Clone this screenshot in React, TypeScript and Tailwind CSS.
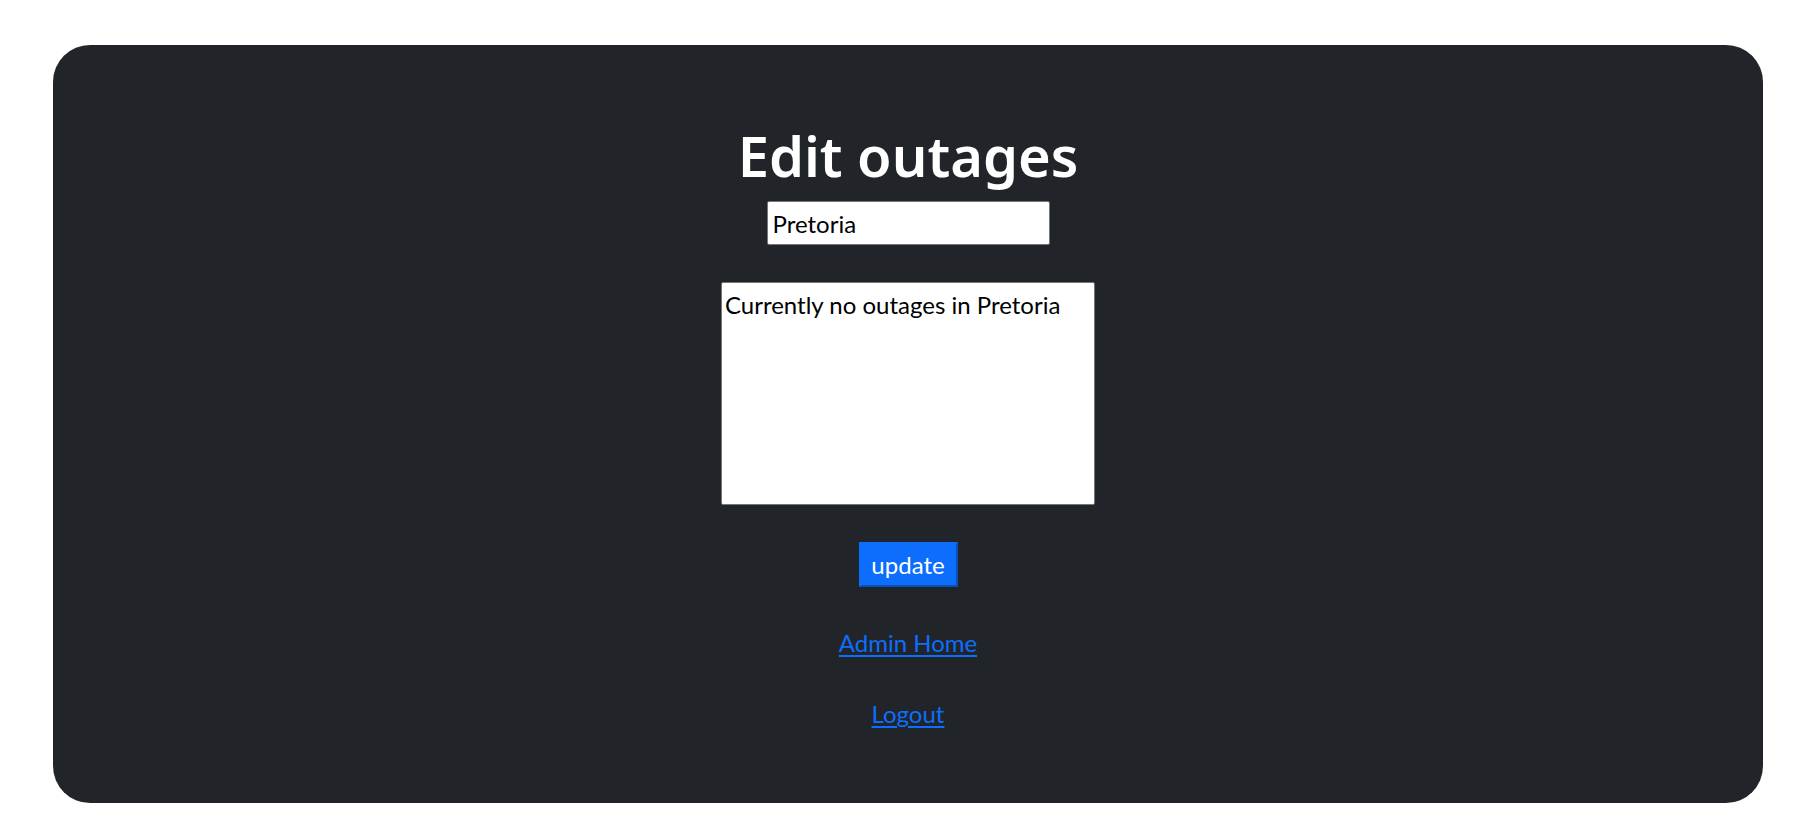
import React from "react";

export default function App() {
  const font = { fontFamily: "Lato, 'Noto Sans', sans-serif" };

  return (
    <div className="h-screen overflow-hidden bg-white pt-[45px]" style={font}>
      <main className="ml-[53px] mr-[47px] flex h-[758px] flex-col items-center rounded-[37px] bg-[#212529] pt-[82px]">
        <h1 className="font-['Noto_Sans',sans-serif] text-[56px] font-semibold leading-none text-white">
          Edit outages
        </h1>

        <input
          type="text"
          defaultValue="Pretoria"
          className="mt-[18px] h-[44px] w-[283px] rounded-[2px] border border-[#767676] bg-white px-[5px] text-[24px] text-black outline-none"
        />

        <textarea
          defaultValue="Currently no outages in Pretoria"
          className="mt-[37px] h-[223px] w-[374px] resize-none rounded-[2px] border border-[#767676] bg-white px-[3px] pt-[6px] text-[24px] leading-[1.3] text-black outline-none"
        />

        <button className="mt-[37px] h-[45px] w-[99px] border-2 border-t-[#0d6efd] border-l-[#0d6efd] border-r-[#0a4fb8] border-b-[#0a4fb8] bg-[#0d6efd] text-[24px] leading-none text-white">
          update
        </button>

        <a href="#" className="mt-[40px] text-[24px] leading-[1.3] text-[#0d6efd] underline underline-offset-[3px]">
          Admin Home
        </a>

        <a href="#" className="mt-[40px] text-[24px] leading-[1.3] text-[#0d6efd] underline underline-offset-[3px]">
          Logout
        </a>
      </main>
    </div>
  );
}
